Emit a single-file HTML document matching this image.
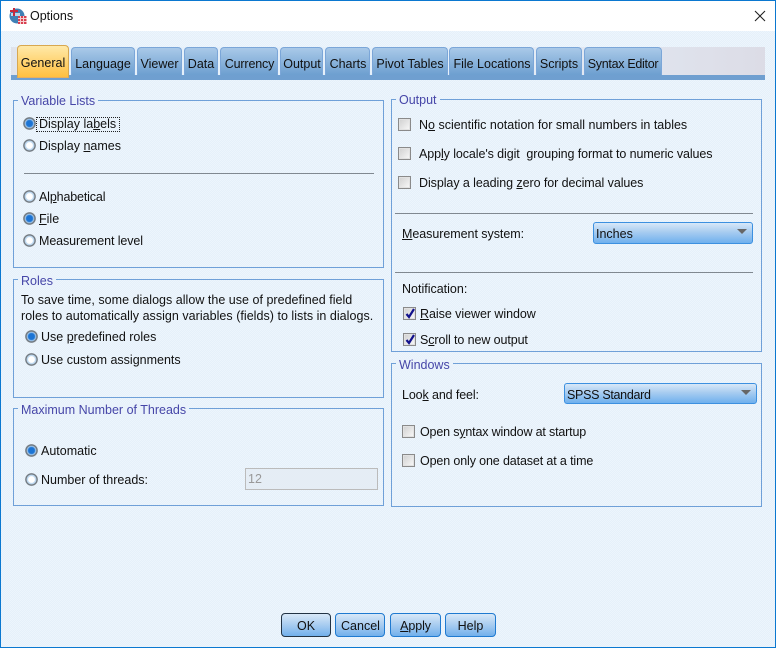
<!DOCTYPE html>
<html><head><meta charset="utf-8"><style>
html,body{margin:0;padding:0}
body{width:776px;height:648px;overflow:hidden;position:relative;font:12.5px/15px "Liberation Sans",sans-serif;color:#111;background:#e8f2fb}
#w{position:absolute;left:0;top:0;width:774px;height:646px;border:1px solid #0b78d0;background:repeating-conic-gradient(#e5f0fa 0 25%,#edf5fc 0 50%) 0 0/2px 2px;overflow:hidden}
#t{position:absolute;left:0;top:0;width:774px;height:30px;background:#fff}
.a{position:absolute;white-space:nowrap}
.g{position:absolute;border:1px solid #6fa0d8;box-sizing:border-box}
.l{position:absolute;background:#e9f2fb;color:#4646a8;padding:0 3px;line-height:14px;white-space:nowrap}
.tab{position:absolute;top:46px;height:28px;box-sizing:border-box;border:1px solid #7ba6d8;border-bottom:0;border-radius:4px 4px 0 0;background:linear-gradient(#a9c9e8,#6d9fd0);text-align:center;line-height:32px;white-space:nowrap}
.r{position:absolute;width:13px;height:13px;border-radius:50%;background:radial-gradient(circle,#fff 0 3px,#b4d2ee 4px,#c4dcf0 4.6px,#70787f 5.2px,#70787f 5.9px,#c0c8d0 6.5px)}
.r.on{background:radial-gradient(circle,#1c74d4 0 3px,#5a9ce0 3.6px,#a8cbee 4.3px,#70787f 5.2px,#70787f 5.9px,#c0c8d0 6.5px)}
.c{position:absolute;width:13px;height:13px;box-sizing:border-box;border:1px solid #8a8a8a;background:linear-gradient(135deg,#cfcfcf,#fafafa);box-shadow:inset 0 0 0 1px #e2e2e2}
.c svg{position:absolute;left:0;top:-1px}
.h{position:absolute;height:1px;background:#808890}
.d{position:absolute;height:21px;box-sizing:border-box;border:1px solid #3c90e0;border-radius:3px;background:linear-gradient(#d8e8f8,#a8ccf0 45%,#6fb0ee);line-height:23px;padding-left:2px;white-space:nowrap}
.d i{position:absolute;right:5px;top:6px;width:0;height:0;border:5px solid transparent;border-top:5px solid #666;border-bottom:0}
.b{position:absolute;top:612px;height:24px;box-sizing:border-box;border:1px solid #1f7ad0;border-radius:4px;background:linear-gradient(#d8e8f8,#a8ccf0 50%,#72b0ec);text-align:center;line-height:24px}
u{text-underline-offset:1px}
</style></head><body>
<div id="w">
<div id="t"></div>
<svg class="a" style="left:8px;top:6px" width="18" height="18" viewBox="0 0 18 18"><circle cx="8" cy="9" r="7.5" fill="#3f7fb5"/><path d="M2 6h9v3H2z" fill="#bcd6ea"/><path d="M5 1v8M1 4h8" stroke="#c8283c" stroke-width="2" fill="none"/><rect x="9" y="9" width="8.5" height="8" fill="#d84050"/><path d="M9 11.5h8.5M9 14.5h8.5M11.5 9v8M14.5 9v8" stroke="#f6d0d0" stroke-width="1"/></svg>
<div class="a" style="left:29px;top:8px">Options</div>
<svg class="a" style="left:753px;top:9px" width="12" height="12" viewBox="0 0 12 12"><path d="M1 1l10 10M11 1L1 11" stroke="#222" stroke-width="1.1" fill="none"/></svg>

<div class="a" style="left:10px;top:46px;width:754px;height:28px;background:linear-gradient(90deg,#dfe2ea 0,#e5f0fa 3%,#e5f0fa 60%,#dcdce6)"></div>
<div class="a" style="left:10px;top:74px;width:754px;height:5px;background:#6f9fd0"></div>
<div class="tab" style="left:16px;top:44px;width:52px;height:33px;background:linear-gradient(#ffe9a8,#ffc040);border-color:#d8a850;line-height:34px;border-bottom:1px solid #e8b060">General</div>
<div class="tab" style="left:70px;width:64px">Language</div>
<div class="tab" style="left:136px;width:45px">Viewer</div>
<div class="tab" style="left:183px;width:34px">Data</div>
<div class="tab" style="left:219px;width:58px;letter-spacing:-.15px;text-indent:1px">Currency</div>
<div class="tab" style="left:279px;width:43px;text-indent:1px">Output</div>
<div class="tab" style="left:324px;width:45px;text-indent:1px">Charts</div>
<div class="tab" style="left:371px;width:76px">Pivot Tables</div>
<div class="tab" style="left:448px;width:85px;text-indent:1px">File Locations</div>
<div class="tab" style="left:535px;width:46px">Scripts</div>
<div class="tab" style="left:583px;width:78px;letter-spacing:-.3px">Syntax Editor</div>

<div class="g" style="left:12px;top:99px;width:371px;height:168px"></div><div class="l" style="left:17px;top:93px">Variable Lists</div>
<div class="a" style="left:35px;top:116px;width:82px;height:13px;border:1px dotted #222"></div>
<div class="r on" style="left:22px;top:116px"></div><div class="a" style="left:38px;top:116px">Display la<u>b</u>els</div>
<div class="r" style="left:22px;top:138px"></div><div class="a" style="left:38px;top:138px">Display <u>n</u>ames</div>
<div class="h" style="left:23px;top:172px;width:350px"></div>
<div class="r" style="left:22px;top:189px"></div><div class="a" style="left:38px;top:189px;letter-spacing:-.15px">Al<u>p</u>habetical</div>
<div class="r on" style="left:22px;top:211px"></div><div class="a" style="left:38px;top:211px"><u>F</u>ile</div>
<div class="r" style="left:22px;top:233px"></div><div class="a" style="left:38px;top:233px;letter-spacing:-.1px">Measurement level</div>

<div class="g" style="left:12px;top:278px;width:371px;height:119px"></div><div class="l" style="left:17px;top:273px">Roles</div>
<div class="a" style="left:20px;top:292px;letter-spacing:.02px">To save time, some dialogs allow the use of predefined field</div>
<div class="a" style="left:20px;top:308px;letter-spacing:.03px">roles to automatically assign variables (fields) to lists in dialogs.</div>
<div class="r on" style="left:24px;top:329px"></div><div class="a" style="left:40px;top:329px">Use <u>p</u>redefined roles</div>
<div class="r" style="left:24px;top:352px"></div><div class="a" style="left:40px;top:352px">Use custom assignments</div>

<div class="g" style="left:12px;top:407px;width:371px;height:98px"></div><div class="l" style="left:17px;top:402px">Maximum Number of Threads</div>
<div class="r on" style="left:24px;top:443px"></div><div class="a" style="left:40px;top:443px">Automatic</div>
<div class="r" style="left:24px;top:472px"></div><div class="a" style="left:40px;top:472px">Number of threads:</div>
<div class="a" style="left:244px;top:467px;width:133px;height:22px;box-sizing:border-box;border:1px solid #bbb;background:#e5edf5;color:#999;line-height:20px;padding-left:2px">12</div>

<div class="g" style="left:390px;top:98px;width:371px;height:253px"></div><div class="l" style="left:395px;top:92px">Output</div>
<div class="c" style="left:397px;top:117px"></div><div class="a" style="left:418px;top:117px">N<u>o</u> scientific notation for small numbers in tables</div>
<div class="c" style="left:397px;top:146px"></div><div class="a" style="left:418px;top:146px;letter-spacing:-.09px">App<u>l</u>y locale's digit&nbsp; grouping format to numeric values</div>
<div class="c" style="left:397px;top:175px"></div><div class="a" style="left:418px;top:175px;letter-spacing:-.07px">Display a leading <u>z</u>ero for decimal values</div>
<div class="h" style="left:394px;top:212px;width:358px"></div>
<div class="a" style="left:401px;top:226px;letter-spacing:-.05px"><u>M</u>easurement system:</div>
<div class="d" style="left:592px;top:221px;width:160px;height:22px">Inches<i></i></div>
<div class="h" style="left:394px;top:271px;width:358px"></div>
<div class="a" style="left:401px;top:281px">Notification:</div>
<div class="c" style="left:402px;top:306px"><svg width="13" height="13" viewBox="0 0 13 13"><path d="M2.5 7l2.5 3L10 2" stroke="#12128c" stroke-width="2.2" fill="none"/></svg></div><div class="a" style="left:419px;top:306px;letter-spacing:-.05px"><u>R</u>aise viewer window</div>
<div class="c" style="left:402px;top:332px"><svg width="13" height="13" viewBox="0 0 13 13"><path d="M2.5 7l2.5 3L10 2" stroke="#12128c" stroke-width="2.2" fill="none"/></svg></div><div class="a" style="left:419px;top:332px;letter-spacing:-.1px">S<u>c</u>roll to new output</div>

<div class="g" style="left:390px;top:362px;width:371px;height:144px"></div><div class="l" style="left:395px;top:357px">Windows</div>
<div class="a" style="left:401px;top:387px;letter-spacing:-.12px">Loo<u>k</u> and feel:</div>
<div class="d" style="left:563px;top:382px;width:193px;letter-spacing:-.3px">SPSS Standard<i></i></div>
<div class="c" style="left:401px;top:424px"></div><div class="a" style="left:419px;top:424px;letter-spacing:-.17px">Open s<u>y</u>ntax window at startup</div>
<div class="c" style="left:401px;top:453px"></div><div class="a" style="left:419px;top:453px;letter-spacing:-.13px">Open only one dataset at a time</div>

<div class="b" style="left:280px;width:50px;border-color:#223344">OK</div>
<div class="b" style="left:334px;width:50px;text-indent:1px">Cancel</div>
<div class="b" style="left:389px;width:51px;letter-spacing:-.1px"><u>A</u>pply</div>
<div class="b" style="left:444px;width:51px">Help</div>
</div>
</body></html>
